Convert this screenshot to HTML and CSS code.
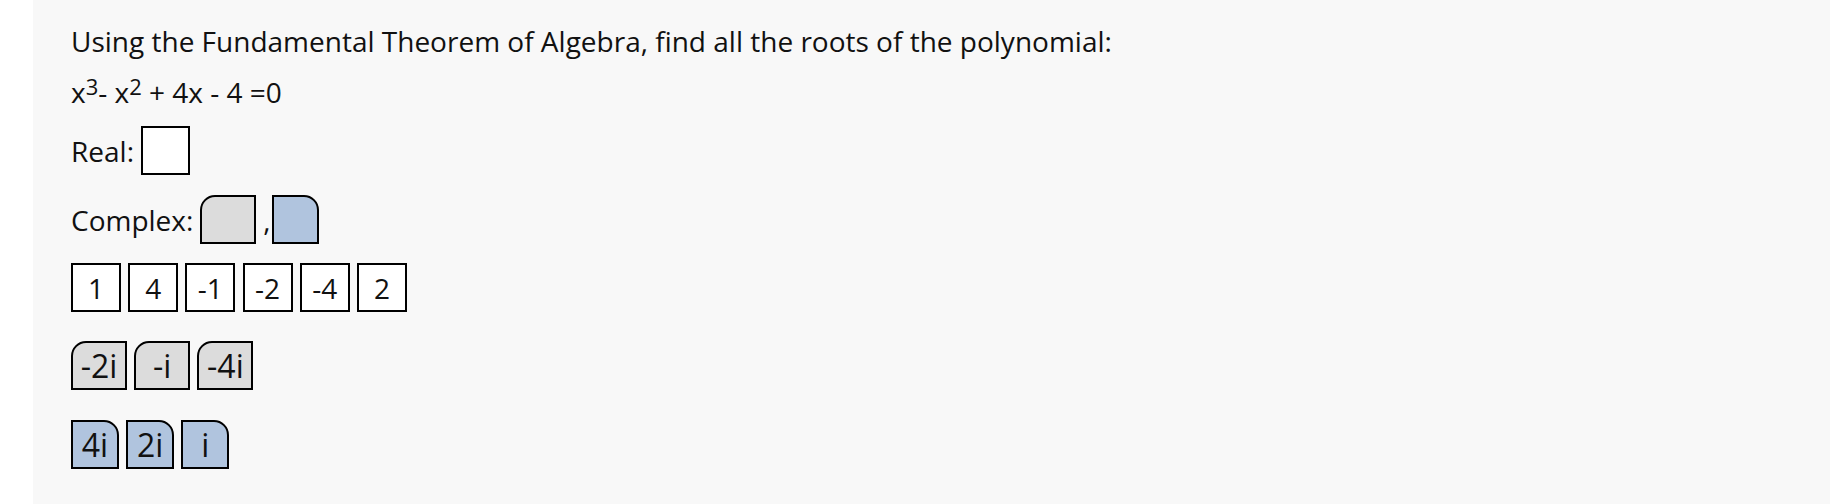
FILE: index.html
```html
<!DOCTYPE html>
<html lang="en">
<head>
<meta charset="utf-8">
<title>Fundamental Theorem of Algebra</title>
<link rel="stylesheet" href="styles.css">
</head>
<body>
<div class="panel">
  <p class="prompt">Using the Fundamental Theorem of Algebra, find all the roots of the polynomial:</p>
  <p class="equation">x<sup>3</sup>- x<sup>2</sup> + 4x - 4 =0</p>
  <div class="answer-row">
    <span class="label">Real:</span>
    <span class="drop drop-real"></span>
  </div>
  <div class="answer-row">
    <span class="label">Complex:</span>
    <span class="drop drop-gray"></span>
    <span class="comma">,</span>
    <span class="drop drop-blue"></span>
  </div>
  <div class="tiles">
    <span class="tile num">1</span>
    <span class="tile num">4</span>
    <span class="tile num">-1</span>
    <span class="tile num">-2</span>
    <span class="tile num">-4</span>
    <span class="tile num">2</span>
  </div>
  <div class="tiles tiles-gray">
    <span class="tile chip-gray">-2i</span>
    <span class="tile chip-gray">-i</span>
    <span class="tile chip-gray">-4i</span>
  </div>
  <div class="tiles tiles-blue">
    <span class="tile chip-blue">4i</span>
    <span class="tile chip-blue">2i</span>
    <span class="tile chip-blue">i</span>
  </div>
</div>
</body>
</html>
```
FILE: styles.css
```css
html, body {
  margin: 0;
  padding: 0;
  background: #ffffff;
}

body {
  font-family: "Open Sans", "Noto Sans", sans-serif;
  color: #111111;
  font-size: 28px;
}

.panel {
  margin-left: 33px;
  min-height: 504px;
  box-sizing: border-box;
  background: #f8f8f8;
  padding: 22px 38px 0 38px;
}

.prompt,
.equation {
  margin: 0;
  line-height: 38px;
}

.equation {
  margin-top: 13px;
}

.equation sup {
  font-size: 22px;
  line-height: 0;
  vertical-align: 8px;
}

.answer-row {
  display: flex;
  align-items: center;
  height: 49px;
  line-height: 38px;
}

.answer-row:nth-of-type(1) {
  margin-top: 15px;
}

.answer-row + .answer-row {
  margin-top: 20px;
}

.drop {
  box-sizing: border-box;
  height: 49px;
  border: 2px solid #000;
}

.drop-real {
  width: 49px;
  margin-left: 7px;
  background: #ffffff;
}

.drop-gray {
  width: 56px;
  margin-left: 7px;
  background: #dcdcdc;
  border-top-left-radius: 15px;
}

.comma {
  margin-left: 7px;
  width: 8px;
}

.drop-blue {
  width: 47px;
  margin-left: 1px;
  background: #b0c4de;
  border-top-right-radius: 15px;
}

.tiles {
  display: flex;
  gap: 7.2px;
  margin-top: 19px;
}

.tiles-gray {
  margin-top: 29px;
}

.tiles-blue {
  margin-top: 30px;
}

.tile {
  box-sizing: border-box;
  height: 49px;
  border: 2px solid #000;
  display: flex;
  align-items: center;
  justify-content: center;
}

.num {
  width: 50px;
  background: #ffffff;
  line-height: 38px;
}

.chip-gray {
  width: 56px;
  background: #dcdcdc;
  border-top-left-radius: 15px;
  font-size: 32px;
  line-height: 42px;
}

.chip-blue {
  width: 48px;
  background: #b0c4de;
  border-top-right-radius: 15px;
  font-size: 32px;
  line-height: 42px;
}
```
